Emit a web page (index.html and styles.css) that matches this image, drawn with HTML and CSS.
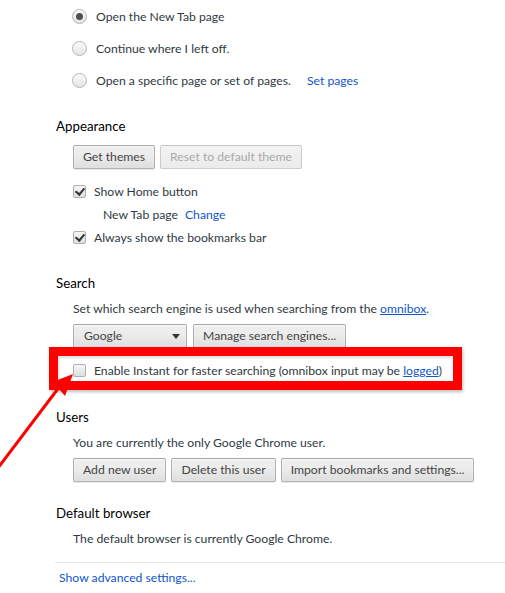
FILE: index.html
```html
<!DOCTYPE html>
<html>
<head>
<meta charset="utf-8">
<title>Settings</title>
<link rel="stylesheet" href="styles.css">
</head>
<body>
<div class="page">
  <div class="startup">
    <div class="radio-row"><span class="radio checked"></span><span>Open the New Tab page</span></div>
    <div class="radio-row"><span class="radio"></span><span>Continue where I left off.</span></div>
    <div class="radio-row"><span class="radio"></span><span>Open a specific page or set of pages.</span><a class="link link-gap">Set pages</a></div>
  </div>

  <section class="section sec-appearance">
    <h3 class="heading">Appearance</h3>
    <div class="section-body">
      <div class="btn-row btn-row-first">
        <button class="btn">Get themes</button>
        <button class="btn" disabled>Reset to default theme</button>
      </div>
      <div class="check-row check-row-first"><span class="check checked"></span><span>Show Home button</span></div>
      <div class="sub-row"><span>New Tab page</span><a class="link link-gap">Change</a></div>
      <div class="check-row"><span class="check checked"></span><span>Always show the bookmarks bar</span></div>
    </div>
  </section>

  <section class="section sec-search">
    <h3 class="heading">Search</h3>
    <div class="section-body">
      <div class="text-row">Set which search engine is used when searching from the <a class="link underline">omnibox</a>.</div>
      <div class="btn-row btn-row-search">
        <div class="btn select"><span>Google</span><span class="caret"></span></div>
        <button class="btn">Manage search engines...</button>
      </div>
      <div class="check-row instant-row"><span class="check"></span><span>Enable Instant for faster searching (omnibox input may be <a class="link underline">logged</a>)</span></div>
    </div>
  </section>

  <section class="section sec-users">
    <h3 class="heading">Users</h3>
    <div class="section-body">
      <div class="text-row">You are currently the only Google Chrome user.</div>
      <div class="btn-row">
        <button class="btn">Add new user</button>
        <button class="btn">Delete this user</button>
        <button class="btn">Import bookmarks and settings...</button>
      </div>
    </div>
  </section>

  <section class="section sec-default">
    <h3 class="heading">Default browser</h3>
    <div class="section-body">
      <div class="text-row">The default browser is currently Google Chrome.</div>
    </div>
  </section>

  <div class="separator"></div>
  <div class="advanced"><a class="link">Show advanced settings...</a></div>
</div>

<div class="callout-box"></div>
<svg class="callout-arrow" width="100" height="120" viewBox="0 360 100 120">
  <line x1="-2" y1="468" x2="60" y2="386" stroke="#f00" stroke-width="3" stroke-linecap="round"/>
  <polygon points="73,374 50,383 58,388 65,396" fill="#f00"/>
</svg>
</body>
</html>
```

FILE: styles.css
```css
html, body {
  margin: 0;
  padding: 0;
  background: #fff;
}

body {
  font-family: Lato, "Open Sans", sans-serif;
  font-size: 12.2px;
  color: #303942;
  width: 505px;
  height: 593px;
  overflow: hidden;
  position: relative;
}

.page {
  padding-left: 56px;
  display: flex;
  flex-direction: column;
}

.startup {
  padding-left: 16px;
  display: flex;
  flex-direction: column;
}

.radio-row {
  height: 32px;
  display: flex;
  align-items: center;
  gap: 9px;
  white-space: nowrap;
}

.radio {
  width: 15px;
  height: 15px;
  box-sizing: border-box;
  border-radius: 50%;
  border: 1px solid #b4b4b4;
  background: linear-gradient(#fafafa, #e4e4e4);
  box-shadow: inset 0 1px 1px rgba(255,255,255,0.8);
  display: flex;
  align-items: center;
  justify-content: center;
  flex: none;
}

.radio.checked::after {
  content: "";
  width: 7px;
  height: 7px;
  border-radius: 50%;
  background: #505050;
}

.link {
  color: #15c;
  text-decoration: none;
}

.link-gap {
  margin-left: 7px;
}

.underline {
  text-decoration: underline;
}

.section {
  display: flex;
  flex-direction: column;
}

.heading {
  margin: 0;
  font-size: 13.3px;
  font-weight: normal;
  color: #000;
  height: 20px;
  line-height: 20px;
  white-space: nowrap;
}

.section-body {
  padding-left: 17px;
  display: flex;
  flex-direction: column;
}

.sec-appearance { margin-top: 20px; }
.sec-search { margin-top: 24px; }
.sec-users { margin-top: 25px; }
.sec-default { margin-top: 21px; }

.btn-row {
  display: flex;
  gap: 5px;
  margin-top: 5px;
}

.btn-row-first {
  margin-top: 9px;
}

.btn-row-search {
  gap: 6px;
}

.btn {
  height: 24px;
  box-sizing: border-box;
  padding: 0 9px;
  font-family: inherit;
  font-size: 12.2px;
  color: #444;
  border: 1px solid rgba(0,0,0,0.25);
  border-radius: 2px;
  background: linear-gradient(#ededed, #ededed 38%, #dedede);
  box-shadow: 0 1px 0 rgba(0,0,0,0.08), inset 0 1px 2px rgba(255,255,255,0.75);
  white-space: nowrap;
  line-height: 22px;
  margin: 0;
}

.btn:disabled {
  color: #aaa;
  border-color: rgba(0,0,0,0.15);
  background: linear-gradient(#f3f3f3, #ebebeb);
  box-shadow: none;
}

.select {
  width: 114px;
  padding: 0 6px 0 10px;
  display: flex;
  align-items: center;
  justify-content: space-between;
}

.caret {
  width: 0;
  height: 0;
  border-left: 4px solid transparent;
  border-right: 4px solid transparent;
  border-top: 5px solid #333;
  margin-top: 1px;
}

.check-row {
  height: 23px;
  display: flex;
  align-items: center;
  gap: 8px;
  white-space: nowrap;
}

.check-row-first {
  margin-top: 11px;
}

.check {
  width: 13px;
  height: 13px;
  box-sizing: border-box;
  border: 1px solid #b0b0b0;
  border-radius: 2px;
  background: linear-gradient(#f6f6f6, #dedede);
  position: relative;
  flex: none;
}

.check.checked::after {
  content: "";
  position: absolute;
  left: 3px;
  top: 0px;
  width: 4px;
  height: 7px;
  border-right: 2px solid #333;
  border-bottom: 2px solid #333;
  transform: rotate(40deg);
}

.sub-row {
  height: 23px;
  display: flex;
  align-items: center;
  padding-left: 30px;
  white-space: nowrap;
}

.text-row {
  height: 20px;
  line-height: 20px;
  margin-top: 6px;
  white-space: nowrap;
}

.instant-row {
  margin-top: 11px;
}

.separator {
  margin-top: 13px;
  margin-left: -1px;
  height: 1px;
  background: #e5e5e5;
}

.advanced {
  margin-top: 5px;
  height: 20px;
  line-height: 20px;
  padding-left: 3px;
}

.callout-box {
  position: absolute;
  left: 49px;
  top: 347px;
  width: 413px;
  height: 43px;
  box-sizing: border-box;
  border: 9px solid #f00;
  box-shadow: 1px 2px 3px rgba(0,0,0,0.25), inset 1px 2px 3px rgba(0,0,0,0.15);
}

.callout-arrow {
  position: absolute;
  left: 0;
  top: 360px;
  overflow: visible;
}
```
